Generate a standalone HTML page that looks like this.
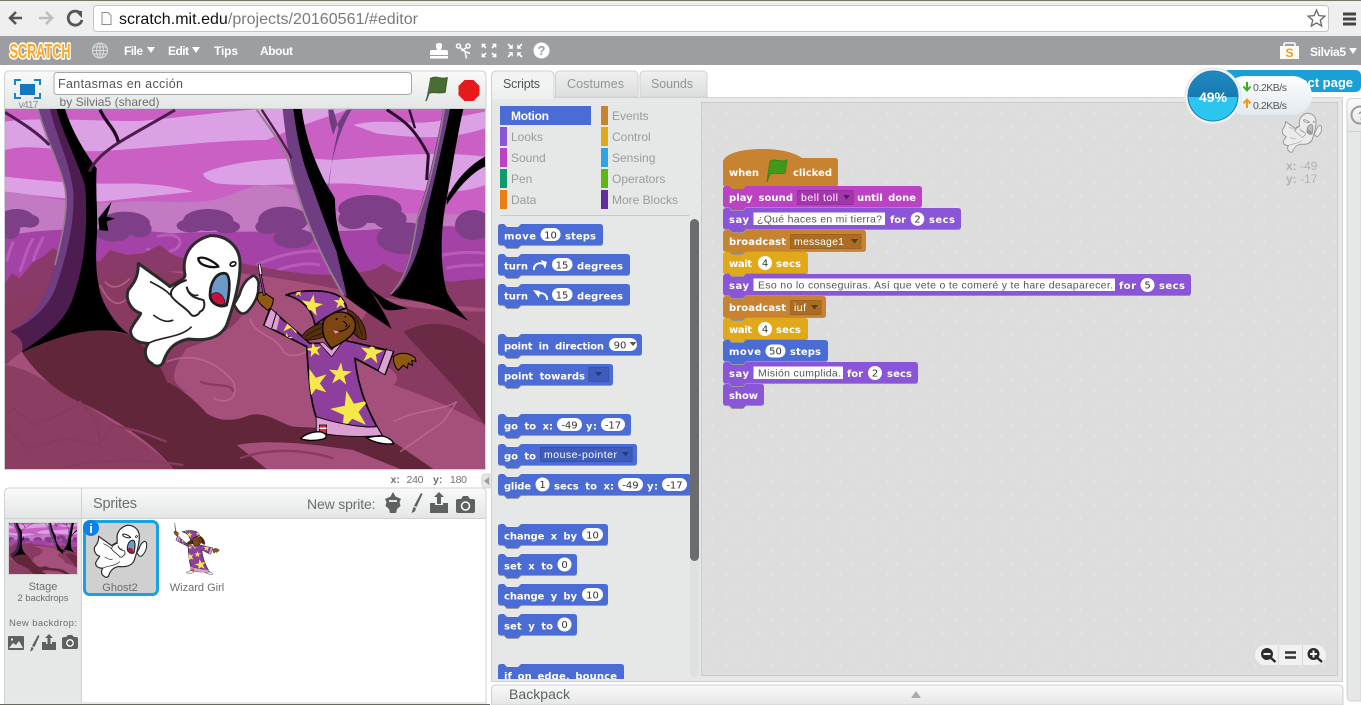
<!DOCTYPE html>
<html><head><meta charset="utf-8"><title>Scratch</title>
<style>
html,body{margin:0;padding:0;background:#fff;width:1361px;height:705px;overflow:hidden}
svg{display:block;position:absolute;left:0;top:0}
text{font-family:"Liberation Sans",sans-serif}
.b text{font-family:"DejaVu Sans",sans-serif;font-weight:700;font-size:10px;fill:#fff}
.b text.n{font-family:"DejaVu Sans",sans-serif;font-weight:400;font-size:10px;fill:#333;text-anchor:middle}
.b text.i{font-family:"Liberation Sans",sans-serif;font-weight:400;font-size:10.5px;fill:#555}
.b text.d{font-family:"Liberation Sans",sans-serif;font-weight:400;font-size:10.5px;fill:#fff}
text.c{font-size:12px;fill:#9b9b9b}
text.m{font-weight:700;font-size:12px;fill:#fff}
.bl{filter:drop-shadow(0 1px 0 rgba(0,0,0,.32))}
</style></head><body>
<svg width="1361" height="705" viewBox="0 0 1361 705" xmlns="http://www.w3.org/2000/svg">
<defs>
<linearGradient id="hd" x1="0" y1="0" x2="0" y2="1"><stop offset="0" stop-color="#fafafa"/><stop offset="1" stop-color="#e4e6e6"/></linearGradient>
<linearGradient id="tb" x1="0" y1="0" x2="0" y2="1"><stop offset="0" stop-color="#f0f0f0"/><stop offset="1" stop-color="#dcdddd"/></linearGradient>
<linearGradient id="pl" x1="0" y1="0" x2="0" y2="1"><stop offset="0" stop-color="#fdfeff"/><stop offset="1" stop-color="#e3eaef"/></linearGradient>
<linearGradient id="top" x1="0" y1="0" x2="0" y2="1"><stop offset="0" stop-color="#2189bf"/><stop offset="1" stop-color="#0f6aa6"/></linearGradient>
<clipPath id="stc"><rect x="15" y="12" width="1440" height="1080"/></clipPath>
<clipPath id="pal"><rect x="492" y="218" width="198" height="461"/></clipPath>
<clipPath id="topc"><rect x="1185" y="68" width="56" height="29"/></clipPath>
<clipPath id="robe"><path d="M600 385L480 280L462 330L590 395C595 470 600 560 620 610L620 650C680 665 760 665 815 660C780 600 745 530 735 430L825 478L850 410L700 375L665 410L630 385Z"/></clipPath>
<clipPath id="hatc"><path d="M528 240C570 225 650 220 690 245C705 260 710 275 710 280C680 285 640 310 615 330C610 300 590 255 528 240Z"/></clipPath>
<polygon id="s" points="0,-1 .225,-.309 .951,-.309 .363,.118 .588,.809 0,.382 -.588,.809 -.363,.118 -.951,-.309 -.225,-.309"/>
<pattern id="dots" x="1104" y="610" width="23" height="23" patternUnits="userSpaceOnUse">
<path d="M-1.5 0h3M0-1.5v3M21.5 0h3M23-1.5v3M-1.5 23h3M0 21.5v3M21.5 23h3M23 21.5v3M11.5 10h3M13 8.5v3" stroke="#e3e4e3" stroke-width="1" fill="none"/>
</pattern>

<g id="bg">
<rect x="15" y="12" width="1440" height="1080" fill="#cb60c4"/>
<g fill="#dca0e4">
<path d="M15 50C120 35 300 50 420 48C520 40 620 25 780 12L1050 12C1000 30 900 60 800 105C650 105 500 125 350 135C200 150 100 110 15 135Z"/>
<path d="M1060 60C1150 35 1250 70 1350 40L1455 20V70C1350 105 1250 100 1130 85Z"/>
<path d="M610 205C660 180 800 150 1000 165C1150 155 1300 135 1455 155V240C1350 280 1250 250 1100 240C1000 225 800 250 650 235C620 225 610 215 610 205Z"/>
<path d="M15 215C100 225 250 240 400 235C470 238 530 245 580 260L300 290L15 262Z"/>
</g>
<path fill="#c27ac2" d="M15 260C100 265 200 300 350 292C450 282 550 300 640 285C700 272 750 238 800 240C880 245 950 285 1050 290C1150 300 1300 310 1455 310V520H15Z"/>
<path fill="#cb60c4" d="M1000 280C1150 290 1300 290 1455 275V330L1000 320Z"/>
<path fill="#a542a8" d="M15 395C100 370 300 365 520 385C700 375 900 385 1100 375C1300 360 1400 360 1455 375V620H15Z"/>
<g fill="none" stroke="#b95cb9" stroke-width="9">
<path d="M100 400C80 430 75 460 60 500M130 395C120 420 105 440 100 470M40 410C30 430 25 450 20 470"/>
<path d="M470 395C520 380 560 400 530 430C500 450 460 445 440 430"/>
<path d="M770 480C850 440 950 430 1000 445M800 510C860 480 920 470 960 480"/>
<path d="M1290 460C1350 440 1420 440 1455 445M1340 490C1380 480 1420 480 1450 480"/>
</g>
<g fill="#7f3e88">
<ellipse cx="50" cy="340" rx="52" ry="28"/><ellipse cx="88" cy="348" rx="30" ry="20"/><ellipse cx="30" cy="372" rx="30" ry="30"/>
<ellipse cx="375" cy="355" rx="75" ry="35"/><ellipse cx="340" cy="385" rx="50" ry="25"/><ellipse cx="420" cy="372" rx="35" ry="25"/>
<ellipse cx="625" cy="345" rx="75" ry="33"/><ellipse cx="572" cy="362" rx="42" ry="20"/><ellipse cx="680" cy="365" rx="40" ry="20"/>
<ellipse cx="850" cy="345" rx="75" ry="40"/><ellipse cx="802" cy="365" rx="36" ry="22"/><ellipse cx="880" cy="400" rx="60" ry="30"/>
<ellipse cx="1110" cy="312" rx="95" ry="42"/><ellipse cx="1060" cy="342" rx="45" ry="30"/><ellipse cx="1170" cy="342" rx="50" ry="30"/>
<ellipse cx="1420" cy="360" rx="55" ry="45"/><ellipse cx="1215" cy="400" rx="85" ry="48"/>
</g>
<path fill="#8a3a68" d="M15 535L35 505L60 520L100 470L130 455L160 428L180 445L240 455L300 470L330 435L380 450L430 445L480 420L520 450L580 470L700 470C850 500 1000 530 1130 490L1150 475L1190 500L1250 510L1350 530L1400 525L1455 520V740H15Z"/>
<path fill="#a5507b" d="M15 590C120 540 280 510 500 500C700 490 850 520 1050 560C1200 590 1350 600 1455 610V1092H15Z"/>
<path fill="#883a60" d="M15 590C120 540 280 510 500 500C620 510 700 560 740 610C700 680 640 700 560 730C520 790 500 830 560 860L300 810L65 740L15 780Z"/>
<path fill="#8b3d62" d="M15 780C100 790 180 860 260 900C350 960 470 1030 520 1092H15Z"/>
<path fill="#883a60" d="M1120 590C1250 610 1350 620 1455 620V960C1400 930 1300 880 1180 840C1230 800 1100 760 1050 700Z"/>
<path fill="#62263a" d="M65 740C180 660 260 660 390 690C440 730 480 770 500 830C540 850 580 880 620 925C660 950 700 950 750 930C800 920 830 950 880 965C960 970 1070 970 1180 1010L1300 1092H1200L1060 1035C950 1020 820 1000 710 1020L800 1092H520C480 1040 400 970 260 900C180 870 110 810 65 740Z"/>
<path fill="#6a2a44" d="M1210 680C1290 640 1380 650 1455 720V960C1400 880 1300 780 1210 680Z"/>
<g fill="none" stroke="#bd6c95" stroke-width="5" opacity=".75">
<path d="M315 530C340 560 370 540 390 520M300 540C340 620 370 600 400 560"/>
<path d="M750 640C760 690 830 690 850 740C870 760 900 750 920 740"/>
<path d="M500 770C580 740 650 770 700 830C720 880 680 900 640 880"/>
<path d="M1180 950C1260 910 1320 920 1370 890L1330 950L1200 1040"/>
</g>
<g fill="none" stroke="#883a60" stroke-width="7">
<path d="M20 930L40 910L100 960L200 920L240 890L290 950L300 1010L340 960L420 980L500 1010M20 970L80 1030L200 1000L300 1020"/>
<path d="M720 1060C800 1030 900 1030 1000 1060M600 830C650 850 690 830 700 860"/>
<path d="M180 1090C300 1060 420 1060 550 1080"/>
</g>
<g>
<path fill="#4c1d4e" d="M112 12L195 12C215 80 260 150 290 190C285 260 295 330 290 400C285 480 290 540 310 590C335 640 360 670 388 688C300 660 200 680 65 742C70 720 70 700 30 680C90 650 140 590 165 480C190 380 210 290 190 230C170 160 130 80 112 12Z"/>
<path fill="#000" d="M170 12L195 12C215 80 260 150 290 190C285 260 295 330 290 400C285 480 290 540 310 590C335 640 360 670 388 688C300 660 200 680 65 742C120 700 200 660 225 560C262 450 262 320 255 240C225 150 190 90 170 12Z"/>
<path fill="#6e3d82" d="M125 12L150 12C170 100 210 170 220 260C225 350 200 450 170 540C150 600 100 650 30 680C90 650 140 590 165 480C190 380 210 290 190 230C170 160 130 80 112 12Z"/>
<path fill="none" stroke="#967d8c" stroke-width="5" d="M114 12C130 80 170 160 190 230C210 290 190 380 165 480"/>
<path fill="none" stroke="#4c1d4e" stroke-width="9" d="M15 22C60 50 110 80 148 120"/>
<path fill="none" stroke="#4c1d4e" stroke-width="9" d="M268 200C300 130 400 90 525 15"/>
<path fill="none" stroke="#1c0a1e" stroke-width="10" d="M300 14C315 50 345 70 355 110"/>
<path fill="#000" d="M295 340L335 290L320 335L345 340L320 350L325 378L298 375Z"/>
</g>
<g>
<path fill="#000" d="M850 12H905C915 80 930 140 975 230L1005 280C1005 350 1020 430 1060 480C1100 540 1150 610 1175 672C1130 640 1080 610 1030 570C990 500 940 400 905 300C880 230 860 130 850 12Z"/>
<path fill="#6e3d82" d="M848 12H880C890 90 905 170 935 240C960 310 985 380 1010 440C1020 490 1035 540 1040 575L1030 570C990 500 940 400 905 300C880 230 860 130 848 12Z"/>
<path fill="none" stroke="#967d8c" stroke-width="6" d="M770 14C810 70 850 120 868 175C885 250 930 400 1030 570"/>
<path fill="none" stroke="#4c1d4e" stroke-width="7" d="M785 14C820 70 850 110 875 160"/>
<path fill="#6e3d82" d="M985 265C985 180 1020 70 1055 14L1040 14C1015 50 1005 70 1000 90C990 60 985 30 985 14H1000L1016 70C1000 130 990 200 985 265Z"/>
<path fill="#000" d="M1100 540C1130 570 1180 600 1225 610C1180 615 1165 620 1150 610Z"/>
</g>
<g>
<path fill="#000" d="M1330 12L1390 12C1370 100 1355 200 1340 280C1320 380 1320 480 1340 560C1360 600 1390 630 1405 648C1340 610 1280 590 1200 580L1170 570C1210 530 1240 430 1250 340C1280 260 1310 120 1330 12Z"/>
<path fill="#6e3d82" d="M1335 12H1350C1330 110 1300 240 1280 320C1265 430 1230 510 1180 570C1215 520 1240 430 1250 340C1280 260 1310 120 1330 12Z"/>
<path fill="none" stroke="#967d8c" stroke-width="5" d="M1333 12C1315 120 1285 260 1252 340C1240 430 1220 520 1172 568"/>
<path fill="none" stroke="#2a0e2c" stroke-width="9" d="M1160 14C1200 40 1240 60 1285 150L1280 225"/>
<path fill="none" stroke="#2a0e2c" stroke-width="7" d="M1228 14L1245 70"/>
<path fill="#000" d="M1455 155C1410 180 1370 220 1340 280L1340 300C1380 240 1420 200 1455 185Z"/>
</g>
</g>

<g id="ghost">
<path fill="#fff" stroke="#2b2b2b" stroke-width="8" stroke-linejoin="round" d="M372 268C385 295 398 302 412 290C432 270 447 240 445 215C450 195 432 175 425 185C405 195 395 215 388 240Z"/>
<path fill="#fff" stroke="#2b2b2b" stroke-width="9" stroke-linejoin="round" d="M300 62C350 60 388 95 390 140C392 190 375 260 350 330C330 370 290 378 235 372C200 380 175 395 160 440C155 455 135 458 125 445C105 435 100 405 115 385C75 385 60 365 62 345C72 320 90 305 92 295C60 285 45 250 55 225C70 205 85 190 85 145C110 165 150 190 180 215C200 200 225 195 225 180C215 130 235 80 300 62Z"/>
<path fill="#fff" stroke="#222" stroke-width="6" stroke-linejoin="round" d="M230 195C200 205 175 225 185 245C200 265 230 280 240 295C250 310 265 300 270 290C285 285 285 265 280 255C260 250 235 245 230 215"/>
<path fill="none" stroke="#222" stroke-width="5" d="M230 215C235 235 250 245 265 240M120 200C140 210 170 225 180 240M130 300C150 315 170 325 190 315M115 385C150 365 210 370 245 335"/>
<path fill="#fff" stroke="#111" stroke-width="7" d="M265 130C285 120 325 150 325 155C300 160 265 150 265 130Z"/>
<ellipse cx="369" cy="147" rx="9" ry="6" fill="#fff" stroke="#111" stroke-width="5" transform="rotate(-25 369 147)"/>
<path fill="#6b9ac8" stroke="#1c1c1c" stroke-width="8" d="M300 240C300 200 320 172 345 175C365 180 358 240 350 270C330 280 300 265 300 240Z"/>
<path fill="#c8103c" stroke="#1c1c1c" stroke-width="2" d="M303 240C320 225 340 235 346 265C330 275 305 265 303 240Z"/>
</g>

<g id="wiz">
<path fill="#8e3f9e" stroke="#000" stroke-width="5" stroke-linejoin="round" d="M600 385L480 280L462 330L590 395C595 470 600 560 620 610L620 650C680 665 760 665 815 660C780 600 745 530 735 430L825 478L850 410L700 375L665 410L630 385Z"/>
<g clip-path="url(#robe)" fill="#f4e84a">
<use href="#s" transform="translate(545 325) scale(35) rotate(10)"/>
<use href="#s" transform="translate(530 372) scale(20)"/>
<use href="#s" transform="translate(612 505) scale(46) rotate(-18)"/>
<use href="#s" transform="translate(690 478) scale(36) rotate(5)"/>
<use href="#s" transform="translate(722 588) scale(62) rotate(-12)"/>
<use href="#s" transform="translate(785 413) scale(36) rotate(8)"/>
<use href="#s" transform="translate(612 405) scale(24) rotate(-10)"/>
<path fill="#dda0d4" d="M618 605C680 625 760 640 800 635L820 670L620 660ZM488 272L462 335L500 345L510 300ZM850 405L822 482L805 465L830 400Z"/>
</g>
<path fill="none" stroke="#000" stroke-width="3" d="M618 605C680 625 760 640 800 635M500 290L485 340M830 400L805 465"/>
<path fill="#dda0d4" stroke="#000" stroke-width="2" d="M628 385L665 425L700 378L690 378L665 405L640 382Z"/>
<path fill="#55300f" stroke="#000" stroke-width="2" d="M655 320C620 325 590 340 575 365C585 380 620 378 655 360Z"/>
<path fill="#55300f" stroke="#000" stroke-width="2" d="M712 282C745 295 772 335 768 374C750 376 732 360 722 340Z"/>
<path fill="none" stroke="#2a1505" stroke-width="2.500" d="M585 368C600 350 620 345 640 335M595 372C615 362 630 358 648 350M735 305C748 320 745 340 758 362M725 300C735 320 732 340 745 365"/>
<path fill="#7c4512" stroke="#000" stroke-width="4" stroke-linejoin="round" d="M640 320C655 285 720 278 735 320C745 360 700 380 665 400C650 385 632 360 640 320Z"/>
<path fill="#8e3f9e" stroke="#000" stroke-width="5" stroke-linejoin="round" d="M528 240C570 225 650 220 690 245C705 260 710 275 710 280C680 285 640 310 615 330C610 300 590 255 528 240Z"/>
<g clip-path="url(#hatc)" fill="#f4e84a"><use href="#s" transform="translate(605 272) scale(34) rotate(10)"/><use href="#s" transform="translate(692 262) scale(22)"/><use href="#s" transform="translate(565 232) scale(14)"/></g>
<path fill="none" stroke="#000" stroke-width="3" d="M700 318C708 325 715 330 706 336M672 345C690 355 710 345 720 330"/>
<circle cx="680" cy="312" r="3" fill="#000"/><circle cx="706" cy="305" r="2.500" fill="#000"/>
<path fill="#f0a0c8" d="M670 345L688 350L676 356Z"/>
<path fill="#8f5a10" stroke="#000" stroke-width="3" d="M445 235C465 225 475 245 490 250C490 270 480 285 472 285C460 275 445 265 442 250Z"/>
<path fill="#8f5a10" stroke="#000" stroke-width="3" stroke-linejoin="round" d="M850 425C870 410 895 412 915 428L918 440L905 436L908 452L895 444L892 460L880 450L865 466C852 455 850 440 850 425Z"/>
<path fill="#8e3f9e" stroke="#000" stroke-width="2" d="M453 175L466 240L460 242L448 178Z"/>
<path fill="#fff" stroke="#000" stroke-width="2" d="M445 148L451 147L456 178L449 179Z"/>
<path fill="#e03040" stroke="#000" stroke-width="2" d="M628 630H650V655H628Z"/><path stroke="#fff" stroke-width="4" d="M628 640H650"/>
<path fill="#fff" stroke="#000" stroke-width="4" d="M572 670C590 655 610 650 630 650C650 655 655 665 640 672C615 678 585 678 572 670Z"/>
<path fill="#fff" stroke="#000" stroke-width="4" d="M770 668C790 665 815 660 825 665C840 670 850 680 850 686C820 690 785 680 770 668Z"/>
</g>
</defs>

<!-- browser chrome -->
<rect width="1361" height="36" fill="#efefef"/>
<rect width="1361" height="1" fill="#77746a"/>
<path d="M22 18H11M16 12l-6 6 6 6" fill="none" stroke="#555" stroke-width="2.600"/>
<path d="M39 18H51M46 12l6 6-6 6" fill="none" stroke="#bdbdbd" stroke-width="2.600"/>
<path d="M80 13A7 7 0 1 0 82 20" fill="none" stroke="#555" stroke-width="2.800"/><path d="M75 11h7v7z" fill="#555"/>
<rect x="93.500" y="5.500" width="1235" height="26" rx="3" fill="#fff" stroke="#c3c3c3"/>
<path d="M102 12.500h6l3 3v9h-9z" fill="#fbfbfb" stroke="#8f8f8f"/>
<text x="119" y="24" font-size="16" textLength="299" lengthAdjust="spacing" fill="#7a7a7a"><tspan fill="#111">scratch.mit.edu</tspan>/projects/20160561/#editor</text>
<path d="M1316.500 10l2.400 5.600 6 .5-4.600 4 1.400 5.900-5.200-3.100-5.200 3.100 1.400-5.900-4.600-4 6-.5z" fill="#fff" stroke="#666" stroke-width="1.300"/>
<path d="M1343 14h13M1343 19h13M1343 24h13" stroke="#444" stroke-width="3"/>

<!-- scratch nav -->
<rect y="36" width="1361" height="29" fill="#9c9ea2"/>
<text x="9.500" y="58" font-size="20" font-weight="700" textLength="61" lengthAdjust="spacingAndGlyphs" fill="#fba82a" stroke="#fffbe8" stroke-width="3.500" paint-order="stroke" stroke-linejoin="round">SCRATCH</text>
<g fill="none" stroke="#d9dbdc" stroke-width="1.100"><circle cx="100" cy="50.500" r="7.500"/><ellipse cx="100" cy="50.500" rx="3.500" ry="7.500"/><path d="M100 43v15M92.500 50.500h15M93.500 47h13M93.500 54h13"/></g>
<text class="m" x="124" y="55" textLength="19">File</text><path d="M147 47h8l-4 6z" fill="#fff"/>
<text class="m" x="168" y="55" textLength="21">Edit</text><path d="M192 47h8l-4 6z" fill="#fff"/>
<text class="m" x="214" y="55" textLength="24">Tips</text>
<text class="m" x="260" y="55" textLength="33">About</text>
<path d="M436 45q0-2 3-2t3 2v2l-1 3h5q2 0 2 2v3h-18v-3q0-2 2-2h5l-1-3z" fill="#fff" transform="translate(0 0)"/><rect x="430" y="56" width="18" height="2.500" fill="#fff"/>
<g fill="none" stroke="#fff" stroke-width="1.500"><circle cx="458.500" cy="46" r="2"/><circle cx="468" cy="46" r="2"/><path d="M460 47.500l5 4 1.500 7M466.500 47.500l-5 3.500M465 51.500l5 2"/></g>
<g fill="#fff" stroke="#fff" stroke-width="1.600"><path d="M482 44l4 4M496 44l-4 4M482 57l4-4M496 57l-4-4" fill="none"/><path d="M482 44h3.500l-3.500 3.500zM496 44h-3.500l3.500 3.500zM482 57h3.500l-3.500-3.500zM496 57h-3.500l3.500-3.500z" stroke-width=".6"/></g>
<g fill="#fff" stroke="#fff" stroke-width="1.600"><path d="M508 44l4 4M522 44l-4 4M508 57l4-4M522 57l-4-4" fill="none"/><path d="M512.500 48.500h-3.500l3.500-3.500zM517.500 48.500h3.500l-3.500-3.500zM512.500 52.500h-3.500l3.500 3.500zM517.500 52.500h3.500l-3.500 3.500z" stroke-width=".6"/></g>
<circle cx="541.500" cy="50.500" r="8" fill="#fff"/><text x="541.500" y="55" font-size="13" font-weight="700" text-anchor="middle" fill="#9c9ea2">?</text>
<path d="M1280 46h19v13h-19z" fill="#fbfbf6"/><path d="M1284 46v-2q0-1 1-1h9q1 0 1 1v2" fill="none" stroke="#fff" stroke-width="1.500"/>
<text x="1289.500" y="57" font-size="12" font-weight="700" text-anchor="middle" fill="#f79a1c">S</text>
<text class="m" x="1310" y="56" textLength="36">Silvia5</text><path d="M1349 48h8l-4 6z" fill="#fff"/>

<!-- stage panel -->
<path d="M4.500 109V76q0-5 5-5H481q5 0 5 5v33z" fill="url(#hd)" stroke="#d0d1d2"/>
<rect x="54" y="72.500" width="357.500" height="22" rx="3" fill="#fff" stroke="#a8a8a8"/>
<text x="58" y="88" font-size="12.500" fill="#555" textLength="125" lengthAdjust="spacing">Fantasmas en acción</text>
<text x="59.500" y="106" font-size="12" fill="#6b6d6f" textLength="100" lengthAdjust="spacing">by Silvia5 (shared)</text>
<text x="18.500" y="108" font-size="10.500" fill="#8d8f91" textLength="20">v417</text>
<rect x="20" y="84" width="15" height="11" fill="#1478bf"/>
<path d="M15 85v-5h6M34 80h6v5M15 93v5h6M34 98h6v-5" fill="none" stroke="#1b82c7" stroke-width="2"/>
<path d="M430 79C436 75 441 80 447 78L445 92C439 94 435 91 429 93L426 101" fill="#486e34" stroke="#3f6230" stroke-width="1.500"/>
<path d="M464.500 80h9l6 6v9l-6 6h-9l-6-6v-9z" fill="#e71a1a"/>

<!-- stage -->
<svg x="5" y="109" width="480" height="360" viewBox="15 12 1440 1080">
<g clip-path="url(#stc)">
<use href="#bg"/>
<use href="#ghost" transform="translate(330 330)"/>
<use href="#wiz" transform="translate(330 330)"/>
</g>
</svg>
<rect x="4.500" y="108.500" width="481" height="361" fill="none" stroke="#d0d1d2"/>
<text x="390.500" y="483" font-size="10.500" font-weight="700" fill="#6f7072">x:</text>
<text x="406.500" y="483" font-size="10.500" fill="#6f7072" textLength="17">240</text>
<text x="433" y="483" font-size="10.500" font-weight="700" fill="#6f7072">y:</text>
<text x="450" y="483" font-size="10.500" fill="#6f7072" textLength="17">180</text>
<path d="M482 478q0-4 4-4h4v14h-4q-4 0-4-4z" fill="#e6e8e8" stroke="#d0d1d2"/><path d="M484 481l5-4v8z" fill="#9a9c9e"/>

<!-- sprites panel -->
<path d="M4.500 703V493q0-5 5-5H481q5 0 5 5v210z" fill="#fff" stroke="#d0d1d2"/>
<path d="M5 518V493q0-4.500 4.500-4.500H481q4.500 0 4.500 4.500v25z" fill="url(#hd)"/>
<rect x="5" y="518" width="76" height="185" fill="#e6e8e8"/>
<path d="M81.500 488v215M5 518.500h481" stroke="#d0d1d2"/>
<text x="93" y="508" font-size="14.500" fill="#6b6d6f" textLength="44">Sprites</text>
<text x="307" y="509" font-size="14" fill="#6b6d6f" textLength="68.500">New sprite:</text>
<g fill="#5f6062">
<path d="M393 492l2.500 4.500 5.500 2.500-1.500 3 1 4-3.500 3-1 4h-6l-1-4-3.500-3 1-4-1.500-3 5.500-2.500z"/>
<path d="M421 493l1.500 1-6 13-2.500-1z"/><path d="M413.500 507l2.500 1.200-1 3-3.500 2z"/>
<path d="M430 503h5v2h8v-2h5v10h-18z"/><path d="M439 492l5 5h-3v7h-4v-7h-3z"/>
<rect x="456" y="499" width="19" height="14" rx="2"/>
<path d="M461 499l2-3h5l2 3z"/>
</g>
<rect x="389" y="500" width="8" height="2" fill="#e6e8e8"/>
<circle cx="465.500" cy="506" r="4" fill="none" stroke="#fff" stroke-width="1.500"/>

<svg x="9" y="523" width="68" height="51" viewBox="15 12 1440 1080" preserveAspectRatio="none"><g clip-path="url(#stc)"><use href="#bg"/></g></svg>
<rect x="8.500" y="522.500" width="69" height="52" fill="none" stroke="#d4d4d4"/>
<text x="43" y="590" font-size="11" fill="#6b6d6f" text-anchor="middle">Stage</text>
<text x="43" y="601" font-size="9.500" fill="#6b6d6f" text-anchor="middle" textLength="51">2 backdrops</text>
<text x="43" y="626" font-size="9.500" fill="#6b6d6f" text-anchor="middle" textLength="68">New backdrop:</text>
<g fill="#5f6062">
<rect x="8" y="636" width="16" height="14" rx="1"/>
<path d="M38 635l1.500 1-5 11-2.500-1z"/><path d="M31.500 647l2.200 1-1 2-2.700 1.800z"/>
<path d="M42 642h4v2h6v-2h4v8h-14z"/><path d="M49 634l4 4h-2.500v6h-3v-6h-2.500z"/>
<rect x="62" y="637" width="16" height="12" rx="2"/><path d="M66 637l2-2h4l2 2z"/>
</g>
<path d="M9 648l4-5 3 2 3-4 4 7z M11 638.500h2v2h-2z" fill="#e6e8e8"/>
<circle cx="70" cy="643" r="3.200" fill="none" stroke="#fff" stroke-width="1.300"/>

<rect x="84.500" y="521.500" width="73" height="73" rx="5" fill="#d0d0d0" stroke="#1ba0e0" stroke-width="3"/>
<use href="#ghost" transform="translate(87.400 517) scale(.133)"/>
<circle cx="91" cy="528" r="8" fill="#0d80ea"/>
<text x="91" y="533" font-size="13" font-weight="700" fill="#fff" text-anchor="middle">i</text>
<text x="120" y="591" font-size="11" fill="#6b6d6f" text-anchor="middle">Ghost2</text>
<use href="#wiz" transform="translate(132 509) scale(.095)"/>
<text x="197" y="591" font-size="11" fill="#6b6d6f" text-anchor="middle">Wizard Girl</text>

<!-- tabs -->
<path d="M491.500 97V76q0-5 5-5H549q5 0 5 5v21z" fill="#f2f3f3" stroke="#d0d1d2"/>
<path d="M555.500 97V76q0-5 5-5H633q5 0 5 5v21z" fill="url(#tb)" stroke="#d0d1d2"/>
<path d="M640 97V76q0-5 5-5H702q5 0 5 5v21z" fill="url(#tb)" stroke="#d0d1d2"/>

<!-- scripts panel -->
<rect x="491.500" y="97.500" width="851" height="584" fill="#e6e8e8" stroke="#d0d1d2"/>
<rect x="492" y="90" width="61.500" height="9" fill="#eef0f0"/>
<text x="503" y="88" font-size="12.500" fill="#555" textLength="37">Scripts</text>
<text x="567" y="88" font-size="12.500" fill="#929497" textLength="57">Costumes</text>
<text x="651" y="88" font-size="12.500" fill="#929497" textLength="42">Sounds</text>
<rect x="701.500" y="102.500" width="636" height="573" fill="#dcdddc" stroke="#cacbca"/>
<rect x="702" y="103" width="635" height="572" fill="url(#dots)"/>

<!-- categories -->
<rect x="500" y="106" width="91" height="19" fill="#4a6cd4"/>
<text x="511" y="120" class="m" textLength="38">Motion</text>
<rect x="500" y="127" width="7" height="19" fill="#8a55d7"/><text class="c" x="511" y="141">Looks</text>
<rect x="500" y="148" width="7" height="19" fill="#bb42c3"/><text class="c" x="511" y="162">Sound</text>
<rect x="500" y="169" width="7" height="19" fill="#0e9a6c"/><text class="c" x="511" y="183">Pen</text>
<rect x="500" y="190" width="7" height="19" fill="#ee7d16"/><text class="c" x="511" y="204">Data</text>
<rect x="601" y="106" width="7" height="19" fill="#c88330"/><text class="c" x="612" y="120">Events</text>
<rect x="601" y="127" width="7" height="19" fill="#e1a91a"/><text class="c" x="612" y="141">Control</text>
<rect x="601" y="148" width="7" height="19" fill="#2ca5e2"/><text class="c" x="612" y="162">Sensing</text>
<rect x="601" y="169" width="7" height="19" fill="#5cb712"/><text class="c" x="612" y="183">Operators</text>
<rect x="601" y="190" width="7" height="19" fill="#632d99"/><text class="c" x="612" y="204" textLength="66">More Blocks</text>
<rect x="500" y="215" width="189" height="1" fill="#c8c9c9"/>
<rect x="690" y="219" width="9" height="458" rx="4.500" fill="#dfe1e1"/>
<rect x="690" y="219" width="9" height="342" rx="4.500" fill="#6b6c70"/>

<!-- palette blocks -->
<g clip-path="url(#pal)"><g class="bl" fill="#4a6cd4">
<path d="M501 224h3l3 3h11l3-3h79q3 0 3 3v15q0 3-3 3h-79l-3 3h-11l-3-3h-3q-3 0-3-3v-15q0-3 3-3z"/>
<path d="M501 254h3l3 3h11l3-3h106q3 0 3 3v15q0 3-3 3h-106l-3 3h-11l-3-3h-3q-3 0-3-3v-15q0-3 3-3z"/>
<path d="M501 284h3l3 3h11l3-3h106q3 0 3 3v15q0 3-3 3h-106l-3 3h-11l-3-3h-3q-3 0-3-3v-15q0-3 3-3z"/>
<path d="M501 334h3l3 3h11l3-3h118q3 0 3 3v15q0 3-3 3h-118l-3 3h-11l-3-3h-3q-3 0-3-3v-15q0-3 3-3z"/>
<path d="M501 364h3l3 3h11l3-3h89q3 0 3 3v15q0 3-3 3h-89l-3 3h-11l-3-3h-3q-3 0-3-3v-15q0-3 3-3z"/>
<path d="M501 414h3l3 3h11l3-3h107q3 0 3 3v15q0 3-3 3h-107l-3 3h-11l-3-3h-3q-3 0-3-3v-15q0-3 3-3z"/>
<path d="M501 444h3l3 3h11l3-3h113q3 0 3 3v15q0 3-3 3h-113l-3 3h-11l-3-3h-3q-3 0-3-3v-15q0-3 3-3z"/>
<path d="M501 474h3l3 3h11l3-3h167q3 0 3 3v15q0 3-3 3h-167l-3 3h-11l-3-3h-3q-3 0-3-3v-15q0-3 3-3z"/>
<path d="M501 524h3l3 3h11l3-3h84q3 0 3 3v15q0 3-3 3h-84l-3 3h-11l-3-3h-3q-3 0-3-3v-15q0-3 3-3z"/>
<path d="M501 554h3l3 3h11l3-3h53q3 0 3 3v15q0 3-3 3h-53l-3 3h-11l-3-3h-3q-3 0-3-3v-15q0-3 3-3z"/>
<path d="M501 584h3l3 3h11l3-3h84q3 0 3 3v15q0 3-3 3h-84l-3 3h-11l-3-3h-3q-3 0-3-3v-15q0-3 3-3z"/>
<path d="M501 614h3l3 3h11l3-3h53q3 0 3 3v15q0 3-3 3h-53l-3 3h-11l-3-3h-3q-3 0-3-3v-15q0-3 3-3z"/>
<path d="M501 664h3l3 3h11l3-3h100q3 0 3 3v15q0 3-3 3h-100l-3 3h-11l-3-3h-3q-3 0-3-3v-15q0-3 3-3z"/>
</g>
<g class="b">
<text x="504" y="239.500" textLength="32">move</text><rect x="540.500" y="228" width="20" height="13" rx="6.500" fill="#fff"/><text class="n" x="550.500" y="238.500">10</text><text x="565" y="239.500" textLength="31">steps</text>
<text x="504" y="269.500" textLength="24">turn</text><path d="M534 270a6 6 0 0 1 9-6" fill="none" stroke="#fff" stroke-width="2"/><path d="M541 260l6 2-2 7z" fill="#fff"/><rect x="552" y="258" width="20.500" height="13" rx="6.500" fill="#fff"/><text class="n" x="562" y="268.500">15</text><text x="577" y="269.500" textLength="46">degrees</text>
<text x="504" y="299.500" textLength="24">turn</text><path d="M547 300a6 6 0 0 0-9-6" fill="none" stroke="#fff" stroke-width="2"/><path d="M533 290l7 1-1 7z" fill="#fff"/><rect x="552" y="288" width="20.500" height="13" rx="6.500" fill="#fff"/><text class="n" x="562" y="298.500">15</text><text x="577" y="299.500" textLength="46">degrees</text>
<text x="504" y="349.500" textLength="100" word-spacing="3">point in direction</text><rect x="609" y="338" width="28" height="13" rx="6.500" fill="#fff"/><text class="n" x="620" y="348.500">90</text><path d="M629.500 342h7l-3.500 4z" fill="#555"/>
<text x="504" y="379.500" textLength="81" word-spacing="3">point towards</text><rect x="589" y="367.500" width="19.500" height="14" fill="#3f5cbb" stroke="#3751a5"/><path d="M595 372h7l-3.500 4.500z" fill="#243a80"/>
<text x="504" y="429.500" textLength="49" word-spacing="3">go to x:</text><rect x="557" y="418" width="25" height="13" rx="6.500" fill="#fff"/><text class="n" x="569.500" y="428.500">-49</text><text x="586" y="429.500" textLength="11">y:</text><rect x="601" y="418" width="24" height="13" rx="6.500" fill="#fff"/><text class="n" x="613" y="428.500">-17</text>
<text x="504" y="459.500" textLength="32" word-spacing="3">go to</text><rect x="540.500" y="447.500" width="91.500" height="14" fill="#3f5cbb" stroke="#3751a5"/><text class="d" x="544" y="458" textLength="73">mouse-pointer</text><path d="M622 452h7l-3.500 4.500z" fill="#243a80"/>
<text x="504" y="489.500" textLength="27">glide</text><circle cx="542.500" cy="484.500" r="7" fill="#fff"/><text class="n" x="542.500" y="488">1</text><text x="554" y="489.500" textLength="60" word-spacing="3">secs to x:</text><rect x="618" y="478" width="25" height="13" rx="6.500" fill="#fff"/><text class="n" x="630.500" y="488.500">-49</text><text x="647" y="489.500" textLength="11">y:</text><rect x="662" y="478" width="25" height="13" rx="6.500" fill="#fff"/><text class="n" x="674.500" y="488.500">-17</text>
<text x="504" y="539.500" textLength="73" word-spacing="3">change x by</text><rect x="582" y="528" width="21" height="13" rx="6.500" fill="#fff"/><text class="n" x="592.500" y="538.500">10</text>
<text x="504" y="569.500" textLength="49" word-spacing="3">set x to</text><circle cx="564.500" cy="564.500" r="7" fill="#fff"/><text class="n" x="564.500" y="568">0</text>
<text x="504" y="599.500" textLength="73" word-spacing="3">change y by</text><rect x="582" y="588" width="21" height="13" rx="6.500" fill="#fff"/><text class="n" x="592.500" y="598.500">10</text>
<text x="504" y="629.500" textLength="49" word-spacing="3">set y to</text><circle cx="564.500" cy="624.500" r="7" fill="#fff"/><text class="n" x="564.500" y="628">0</text>
<text x="504" y="679.500" textLength="113" word-spacing="2">if on edge, bounce</text>
</g></g>

<!-- script stack -->
<g class="bl">
<path fill="#8a55d7" d="M726 384h3l3 3h11l3-3h15q3 0 3 3v15q0 3-3 3h-15l-3 3h-11l-3-3h-3q-3 0-3-3v-15q0-3 3-3z"/>
<path fill="#8a55d7" d="M726 362h3l3 3h11l3-3h169q3 0 3 3v15q0 3-3 3h-169l-3 3h-11l-3-3h-3q-3 0-3-3v-15q0-3 3-3z"/>
<path fill="#4a6cd4" d="M726 340h3l3 3h11l3-3h79q3 0 3 3v15q0 3-3 3h-79l-3 3h-11l-3-3h-3q-3 0-3-3v-15q0-3 3-3z"/>
<path fill="#e1a91a" d="M726 318h3l3 3h11l3-3h59q3 0 3 3v15q0 3-3 3h-59l-3 3h-11l-3-3h-3q-3 0-3-3v-15q0-3 3-3z"/>
<path fill="#c88330" d="M726 296h3l3 3h11l3-3h77q3 0 3 3v15q0 3-3 3h-77l-3 3h-11l-3-3h-3q-3 0-3-3v-15q0-3 3-3z"/>
<path fill="#8a55d7" d="M726 274h3l3 3h11l3-3h442q3 0 3 3v15q0 3-3 3h-442l-3 3h-11l-3-3h-3q-3 0-3-3v-15q0-3 3-3z"/>
<path fill="#e1a91a" d="M726 252h3l3 3h11l3-3h59q3 0 3 3v15q0 3-3 3h-59l-3 3h-11l-3-3h-3q-3 0-3-3v-15q0-3 3-3z"/>
<path fill="#c88330" d="M726 230h3l3 3h11l3-3h117q3 0 3 3v15q0 3-3 3h-117l-3 3h-11l-3-3h-3q-3 0-3-3v-15q0-3 3-3z"/>
<path fill="#8a55d7" d="M726 208h3l3 3h11l3-3h212q3 0 3 3v15q0 3-3 3h-212l-3 3h-11l-3-3h-3q-3 0-3-3v-15q0-3 3-3z"/>
<path fill="#bb42c3" d="M726 186h3l3 3h11l3-3h173q3 0 3 3v15q0 3-3 3h-173l-3 3h-11l-3-3h-3q-3 0-3-3v-15q0-3 3-3z"/>
<path fill="#c88330" d="M723 161C727 152 745 149 763 149C782 149 795 153 802 158H835q3 0 3 3v22q0 3-3 3H746l-3 3h-11l-3-3h-3q-3 0-3-3z"/>
</g>
<g class="b">
<text x="729" y="176" textLength="30">when</text>
<path d="M770 161C775 158 781 163 787 160L785 173C780 175 775 172 770 174L767 182Z" fill="#3f9a1c" stroke="#368a16" stroke-width="1"/>
<text x="793" y="176" textLength="39">clicked</text>
<text x="729" y="201" textLength="64" word-spacing="2">play sound</text><rect x="797.500" y="190.500" width="55.500" height="14" fill="#a535ad" stroke="#9530a0"/><text class="d" x="801" y="201" textLength="37">bell toll</text><path d="M843 195h7l-3.500 4.500z" fill="#5a1c60"/><text x="857" y="201" textLength="59" word-spacing="2">until done</text>
<text x="729" y="223" textLength="20">say</text><rect x="753.500" y="212.500" width="131.500" height="12.500" fill="#fff"/><text class="i" x="757" y="222.500" textLength="125">¿Qué haces en mi tierra?</text><text x="890" y="223" textLength="16">for</text><circle cx="917.500" cy="219" r="6.800" fill="#fff"/><text class="n" x="917.500" y="222.500">2</text><text x="929" y="223" textLength="26">secs</text>
<text x="729" y="245" textLength="57">broadcast</text><rect x="790.500" y="234.500" width="70.500" height="14" fill="#aa6d22" stroke="#9c6420"/><text class="d" x="794" y="245" textLength="50">message1</text><path d="M851 239h7l-3.500 4.500z" fill="#5a3a10"/>
<text x="729" y="267" textLength="23">wait</text><circle cx="765" cy="263" r="7" fill="#fff"/><text class="n" x="765" y="266.500">4</text><text x="776" y="267" textLength="25">secs</text>
<text x="729" y="289" textLength="20">say</text><rect x="753.500" y="278.500" width="361.500" height="12.500" fill="#fff"/><text class="i" x="758" y="288.500" textLength="355">Eso no lo conseguiras. Así que vete o te comeré y te hare desaparecer.</text><text x="1119" y="289" textLength="17">for</text><circle cx="1147.500" cy="285" r="7" fill="#fff"/><text class="n" x="1147.500" y="288.500">5</text><text x="1159" y="289" textLength="26">secs</text>
<text x="729" y="311" textLength="57">broadcast</text><rect x="790.500" y="300.500" width="30.500" height="14" fill="#aa6d22" stroke="#9c6420"/><text class="d" x="794" y="311" textLength="12">iuf</text><path d="M811 305h7l-3.500 4.500z" fill="#5a3a10"/>
<text x="729" y="333" textLength="23">wait</text><circle cx="765" cy="329" r="7" fill="#fff"/><text class="n" x="765" y="332.500">4</text><text x="776" y="333" textLength="25">secs</text>
<text x="729" y="355" textLength="32">move</text><rect x="765.500" y="344.500" width="20" height="13" rx="6.500" fill="#fff"/><text class="n" x="775.500" y="354.500">50</text><text x="790" y="355" textLength="31">steps</text>
<text x="729" y="377" textLength="20">say</text><rect x="753.500" y="366.500" width="89.500" height="12.500" fill="#fff"/><text class="i" x="758" y="376.500" textLength="83">Misión cumplida.</text><text x="847" y="377" textLength="16">for</text><circle cx="875" cy="373" r="7" fill="#fff"/><text class="n" x="875" y="376.500">2</text><text x="887" y="377" textLength="25">secs</text>
<text x="729" y="399" textLength="29">show</text>
</g>

<!-- script ghost & coords -->
<g style="filter:grayscale(1)" opacity=".42"><use href="#ghost" transform="translate(1277 107) scale(.1)"/></g>
<text x="1286" y="170" font-size="12" font-weight="700" fill="#b2b3b2">x:</text><text x="1300" y="170" font-size="12" fill="#b2b3b2">-49</text>
<text x="1286" y="183" font-size="12" font-weight="700" fill="#b2b3b2">y:</text><text x="1300" y="183" font-size="12" fill="#b2b3b2">-17</text>

<!-- zoom control -->
<rect x="1255" y="645" width="71" height="20" rx="10" fill="#f1f1f1"/>
<path d="M1278.500 645v20M1302.500 645v20" stroke="#d8d8d8"/>
<g fill="#2b2b2b" stroke="#2b2b2b"><circle cx="1267" cy="654" r="5.500"/><path d="M1271 658l4.500 4" stroke-width="2.500"/><circle cx="1313.500" cy="654" r="5.500"/><path d="M1317.500 658l4.500 4" stroke-width="2.500"/></g>
<path d="M1263.500 654h7M1310 654h7M1313.500 650.500v7" stroke="#f1f1f1" stroke-width="2" fill="none"/>
<path d="M1285 652.500h11M1285 657.500h11" stroke="#333" stroke-width="2.500"/>

<!-- backpack -->
<path d="M491.500 705V690q0-5 5-5H1338q5 0 5 5v15z" fill="url(#hd)" stroke="#d0d1d2"/>
<text x="509" y="699" font-size="14" fill="#5e6062" textLength="61">Backpack</text>
<path d="M911 698l5-7 5 7z" fill="#a8aaac"/>
<rect y="704" width="490" height="1" fill="#6a675e"/>

<!-- right panel -->
<path d="M1361 98.500h-9q-5 0-5 5V696q0 5 5 5h9z" fill="#e6e8e8" stroke="#d0d1d2"/>
<path d="M1347.500 131V103.500q0-4.500 4.500-4.500h9v32z" fill="url(#hd)"/>
<path d="M1347 131.500h14" stroke="#d0d1d2"/>
<circle cx="1360" cy="115" r="8.500" fill="none" stroke="#9c9c9c" stroke-width="2"/><text x="1358" y="120" font-size="12" font-weight="700" fill="#9c9c9c">?</text>

<!-- project page button + widget -->
<path d="M1229 70H1355q6 0 6 6v10q0 6-6 6H1229q-6 0-6-6V76q0-6 6-6z" fill="#19a0d9"/>
<text x="1353" y="87" font-size="13" font-weight="700" fill="#fff" text-anchor="end">See project page</text>
<rect x="1225" y="76" width="87" height="39" rx="19.500" fill="url(#pl)"/>
<circle cx="1213" cy="96" r="28" fill="#f2f5f7" stroke="#dfe5e9"/>
<circle cx="1213" cy="96" r="25" fill="#2cc5f0" stroke="#1a78b0" stroke-width="1"/>
<circle cx="1213" cy="96" r="24.500" fill="url(#top)" clip-path="url(#topc)"/>
<text x="1213" y="102" font-size="14" font-weight="700" fill="#fff" text-anchor="middle">49%</text>
<path d="M1247 82v8M1243.500 86.500l3.500 4 3.500-4" fill="none" stroke="#39ad1c" stroke-width="2"/>
<path d="M1247 108v-8M1243.500 103.500l3.500-4 3.500 4" fill="none" stroke="#f29a14" stroke-width="2"/>
<text x="1253" y="91" font-size="10.500" fill="#555" textLength="34">0.2KB/s</text>
<text x="1253" y="109" font-size="10.500" fill="#555" textLength="34">0.2KB/s</text>
</svg>
</body></html>
